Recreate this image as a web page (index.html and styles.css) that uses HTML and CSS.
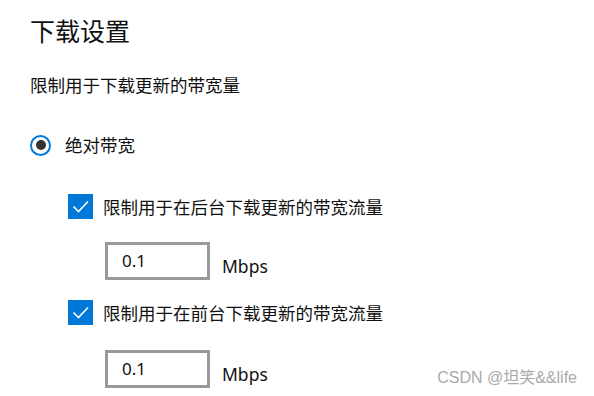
FILE: index.html
```html
<!DOCTYPE html>
<html lang="zh-CN">
<head>
<meta charset="utf-8">
<title>下载设置</title>
<link rel="stylesheet" href="styles.css">
</head>
<body>
<main class="page">
  <h1 class="title">下载设置</h1>
  <p class="subtitle">限制用于下载更新的带宽量</p>
  <div class="radio-row">
    <span class="radio"><span class="radio-dot"></span></span>
    <span class="label">绝对带宽</span>
  </div>
  <div class="group">
    <div class="check-row">
      <span class="checkbox"><svg viewBox="0 0 25 25" width="25" height="25"><path d="M5.5 12.5 L10.5 17.5 L20 7.5" fill="none" stroke="#fff" stroke-width="1.6"/></svg></span>
      <span class="label">限制用于在后台下载更新的带宽流量</span>
    </div>
    <div class="input-row">
      <span class="box">0.1</span>
      <span class="unit">Mbps</span>
    </div>
    <div class="check-row">
      <span class="checkbox"><svg viewBox="0 0 25 25" width="25" height="25"><path d="M5.5 12.5 L10.5 17.5 L20 7.5" fill="none" stroke="#fff" stroke-width="1.6"/></svg></span>
      <span class="label">限制用于在前台下载更新的带宽流量</span>
    </div>
    <div class="input-row input-row-last">
      <span class="box">0.1</span>
      <span class="unit">Mbps</span>
    </div>
  </div>
  <div class="watermark">CSDN @坦笑&amp;&amp;life</div>
</main>
</body>
</html>
```

FILE: styles.css
```css
html, body {
  margin: 0;
  padding: 0;
  background: #fff;
}
body {
  font-family: "Noto Sans", "Noto Sans CJK SC", sans-serif;
  color: #000;
  width: 594px;
  height: 396px;
  overflow: hidden;
}
.page {
  position: relative;
  height: 396px;
  padding-left: 30px;
  box-sizing: border-box;
}
.title {
  margin: 0;
  padding-top: 15px;
  font-size: 25px;
  font-weight: 400;
  line-height: 32px;
  color: #111;
}
.subtitle {
  margin: 0;
  padding-top: 26px;
  font-size: 17.5px;
  line-height: 24px;
  color: #111;
}
.radio-row {
  display: flex;
  align-items: center;
  margin-top: 36px;
  height: 24px;
}
.radio {
  width: 21px;
  height: 21px;
  box-sizing: border-box;
  border: 2px solid #0078d7;
  border-radius: 50%;
  display: flex;
  align-items: center;
  justify-content: center;
}
.radio-dot {
  width: 10px;
  height: 10px;
  border-radius: 50%;
  background: #333;
}
.label {
  font-size: 17.5px;
  line-height: 24px;
  color: #111;
}
.radio-row .label {
  margin-left: 14px;
}
.group {
  padding-left: 38px;
}
.check-row {
  display: flex;
  align-items: center;
  height: 25px;
}
.group > .check-row:first-child {
  margin-top: 37px;
}
.checkbox {
  width: 25px;
  height: 25px;
  background: #0078d7;
  display: block;
}
.checkbox svg {
  display: block;
}
.check-row .label {
  margin-left: 10px;
}
.input-row {
  display: flex;
  align-items: center;
  margin-top: 23px;
  margin-bottom: 20px;
  padding-left: 37px;
}
.input-row-last {
  margin-top: 25px;
}
.box {
  width: 105px;
  height: 38px;
  box-sizing: border-box;
  border: 3px solid #999;
  font-size: 17px;
  line-height: 32px;
  padding-left: 14px;
  color: #111;
}
.unit {
  margin-left: 12px;
  margin-top: 10px;
  font-size: 17.5px;
  line-height: 24px;
  color: #111;
}
.watermark {
  position: absolute;
  right: 17px;
  bottom: 8px;
  font-family: "Liberation Sans", "Noto Sans CJK SC", sans-serif;
  font-size: 16px;
  line-height: 20px;
  color: #aaa;
}
```
